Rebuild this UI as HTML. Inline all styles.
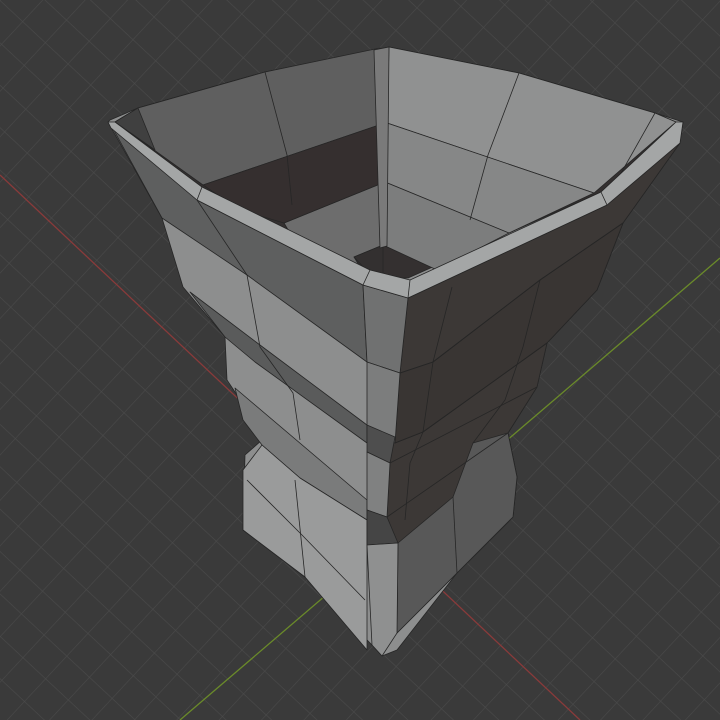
<!DOCTYPE html>
<html><head><style>html,body{margin:0;padding:0;background:#3a3a3a}svg{display:block}</style></head>
<body>
<svg width="720" height="720" viewBox="0 0 720 720" xmlns="http://www.w3.org/2000/svg">
<defs>
<pattern id="g" width="31" height="31" patternUnits="userSpaceOnUse" patternTransform="rotate(43)">
<rect width="31" height="31" fill="#3a3a3a"/>
<path d="M0 0H31M0 0V31" stroke="#4a4a4a" stroke-width="1.2" fill="none"/>
</pattern>
</defs>
<rect width="720" height="720" fill="url(#g)"/>
<line x1="0" y1="175" x2="580" y2="720" stroke="#8a3a3a" stroke-width="1.3"/>
<line x1="720" y1="258" x2="180" y2="720" stroke="#6a8a2a" stroke-width="1.3"/>

<g stroke="#262626" stroke-width="0.8" stroke-linejoin="round">
<!-- body silhouette -->
<polygon fill="#8d8e8e" points="108,122 162,218 183,287 225,337 227,380 247,410 262,440 245,455 243,530 305,577 372,645 382,656 397,650 457,573 513,517 517,477 508,433 537,387 547,343 597,290 623,223 680,143 683,122 655,113 519,73 389,47 265,72 138,108 110,120"/>
<!-- right dark face -->
<polygon fill="#3c3836" points="408,298 607,205 680,143 623,223 597,290 547,343 537,387 508,433 517,477 513,517 457,573 397,633 397,543 387,517 390,463 400,373"/>
<polygon fill="#393533" points="400,373 433,362 540,280 623,223 597,290 547,343 423,432 395,443"/>
<polygon fill="#585858" points="398,543 453,497 473,443 508,433 517,477 513,517 457,573 397,633"/>
<polyline fill="none" points="400,373 433,362 540,280 623,223"/>
<polyline fill="none" points="395,443 423,432 547,343"/>
<polyline fill="none" points="390,463 537,387"/>
<polyline fill="none" points="387,517 508,433"/>
<polyline fill="none" points="453,497 457,573"/>
<polyline fill="none" points="452,287 433,362 423,432 410,463 405,520"/>
<polyline fill="none" points="540,280 523,347 505,400 473,443"/>
<!-- left face bands -->
<polygon fill="#5e5f5f" points="111,125 197,200 363,285 367,362 247,275 162,218"/>
<polygon fill="#5a5b5b" points="190,292 260,345 367,425 367,443 255,362 225,337"/>
<polygon fill="#7a7b7b" points="235,388 367,500 367,520 300,478 262,445 243,420"/>
<polygon fill="#9a9b9b" points="262,445 300,478 367,520 367,650 305,577 243,530 243,470"/>
<polyline fill="none" points="197,200 247,275 260,347 293,393 300,440"/>
<polyline fill="none" points="295,480 305,577"/>
<polyline fill="none" points="247,480 302,535 365,600"/>
<!-- front chamfer strip -->
<polygon fill="#707171" points="363,285 408,298 400,373 367,362"/>
<polygon fill="#7c7d7d" points="367,362 400,373 395,443 367,433"/>
<polygon fill="#4e4e4e" points="367,425 395,437 390,463 367,452"/>
<polygon fill="#808181" points="367,452 390,463 387,517 367,510"/>
<polygon fill="#454545" points="367,510 387,517 398,543 367,545"/>
<polygon fill="#8f9090" points="367,545 398,543 397,633 382,656 372,645"/>
<!-- interior -->
<polygon fill="#343030" points="115,122 138,108 265,72 389,47 519,73 655,113 676,122 601,192 408,278 368,278 201,187"/>
<polygon fill="#5f5f5f" points="115,122 138,108 265,72 380,48 385,123 203,185"/>
<polygon fill="#404040" points="115,122 138,108 155,150"/>
<polygon fill="#909191" points="389,47 519,73 655,113 676,122 594,193 387,123"/>
<polygon fill="#868787" points="387,123 594,193 509,233 385,182"/>
<polygon fill="#7c7d7d" points="385,182 509,233 437,270 383,245"/>
<polygon fill="#6d6d6d" points="284,223 385,182 383,245 354,257 362,270 300,250"/>
<polygon fill="#333030" points="354,257 383,245 383,274 368,272"/>
<polygon fill="#352f2f" points="203,185 385,123 385,182 284,223 240,210"/>
<polygon fill="#7a7a7a" points="374,50 389,47 387,246 380,248"/>
<polyline fill="none" points="265,72 287,155 292,205"/>
<polyline fill="none" points="519,73 488,155 470,220"/>
<polyline fill="none" points="655,113 620,175"/>
<!-- rim -->
<polygon fill="#a4a6a6" points="108,122 111,128 197,200 363,285 408,298 607,205 680,143 683,122 676,122 601,192 410,280 370,270 202,187 115,122"/>
<polyline fill="none" points="202,187 197,200"/>
<polyline fill="none" points="370,270 363,285"/>
<polyline fill="none" points="410,280 408,298"/>
<polyline fill="none" points="601,192 607,205"/>
</g>
</svg>
</body></html>
